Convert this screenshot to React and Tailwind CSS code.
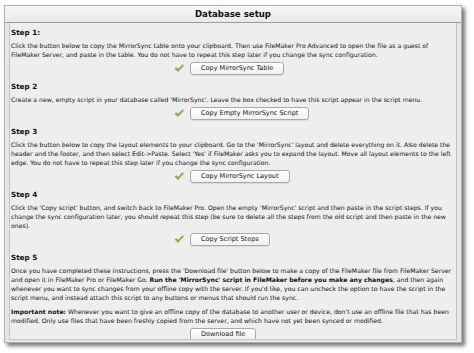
import React from "react";

const font = { fontFamily: '"DejaVu Sans", "Noto Sans", sans-serif' };

function Check() {
  return (
    <svg width="10" height="9" viewBox="0 0 10 9" className="shrink-0">
      <path
        d="M0.8 4.6 L2.4 3.4 L4 5.2 L8.6 0.6 L9.6 1.6 L4 7.8 Z"
        fill="#86b84a"
        stroke="#6d9c36"
        strokeWidth="0.4"
        strokeLinejoin="round"
      />
    </svg>
  );
}

function ActionRow({ label, check = true }) {
  return (
    <div className="flex items-center pl-[163px] h-[16px]">
      <div className="w-[16px] flex justify-start">{check && <Check />}</div>
      <button className="h-[13px] px-[10px] rounded-[3px] border border-[#a9a9a9] bg-gradient-to-b from-white to-[#f1f1f1] text-[6.5px] leading-none text-[#111] shadow-[0_1px_0_rgba(0,0,0,0.08)]">
        {label}
      </button>
    </div>
  );
}

function Step({ title, children, label, check }) {
  return (
    <div className="mb-[5px]">
      <div className="font-bold text-[7.2px] leading-[12px] mb-[2px]">{title}</div>
      <div className="text-[6.15px] leading-[9px]">{children}</div>
      <div className="mt-[1px]">
        <ActionRow label={label} check={check} />
      </div>
    </div>
  );
}

export default function App() {
  return (
    <div className="w-[474px] h-[353px] bg-white pl-[4px] pt-[5px]" style={font}>
      <div className="w-[458px] h-[338px] border border-[#b0b0b0] bg-[#e6e6e6] flex flex-col shadow-[3px_3px_4px_rgba(0,0,0,0.55)]">
        <div className="h-[17px] shrink-0 flex items-center justify-center bg-gradient-to-b from-[#f7f7f7] to-[#e9e9e9] border-b border-[#9c9c9c] font-bold text-[8.6px] text-[#111]">
          Database setup
        </div>
        <div className="flex-1 mx-[4px] mb-[2px] bg-[#eeeeee] border-x border-b border-[#c4c4c4] px-[1px] pt-[4px] text-[#111] overflow-hidden">
          <Step title="Step 1:" label="Copy MirrorSync Table">
            Click the button below to copy the MirrorSync table onto your clipboard. Then use FileMaker Pro Advanced to open the file as a guest of FileMaker Server, and paste in the table. You do not have to repeat this step later if you change the sync configuration.
          </Step>
          <Step title="Step 2" label="Copy Empty MirrorSync Script">
            Create a new, empty script in your database called 'MirrorSync'. Leave the box checked to have this script appear in the script menu.
          </Step>
          <Step title="Step 3" label="Copy MirrorSync Layout">
            Click the button below to copy the layout elements to your clipboard. Go to the 'MirrorSync' layout and delete everything on it. Also delete the header and the footer, and then select Edit-&gt;Paste. Select 'Yes' if FileMaker asks you to expand the layout. Move all layout elements to the left edge. You do not have to repeat this step later if you change the sync configuration.
          </Step>
          <Step title="Step 4" label="Copy Script Steps">
            Click the 'Copy script' button, and switch back to FileMaker Pro. Open the empty 'MirrorSync' script and then paste in the script steps. If you change the sync configuration later, you should repeat this step (be sure to delete all the steps from the old script and then paste in the new ones).
          </Step>
          <Step title="Step 5" label="Download file" check={false}>
            <p>
              Once you have completed these instructions, press the 'Download file' button below to make a copy of the FileMaker file from FileMaker Server and open it in FileMaker Pro or FileMaker Go.{" "}
              <b>Run the 'MirrorSync' script in FileMaker before you make any changes</b>, and then again whenever you want to sync changes from your offline copy with the server. If you'd like, you can uncheck the option to have the script in the script menu, and instead attach this script to any buttons or menus that should run the sync.
            </p>
            <p className="mt-[5px]">
              <b>Important note:</b> Whenever you want to give an offline copy of the database to another user or device, don't use an offline file that has been modified. Only use files that have been freshly copied from the server, and which have not yet been synced or modified.
            </p>
          </Step>
        </div>
      </div>
    </div>
  );
}
